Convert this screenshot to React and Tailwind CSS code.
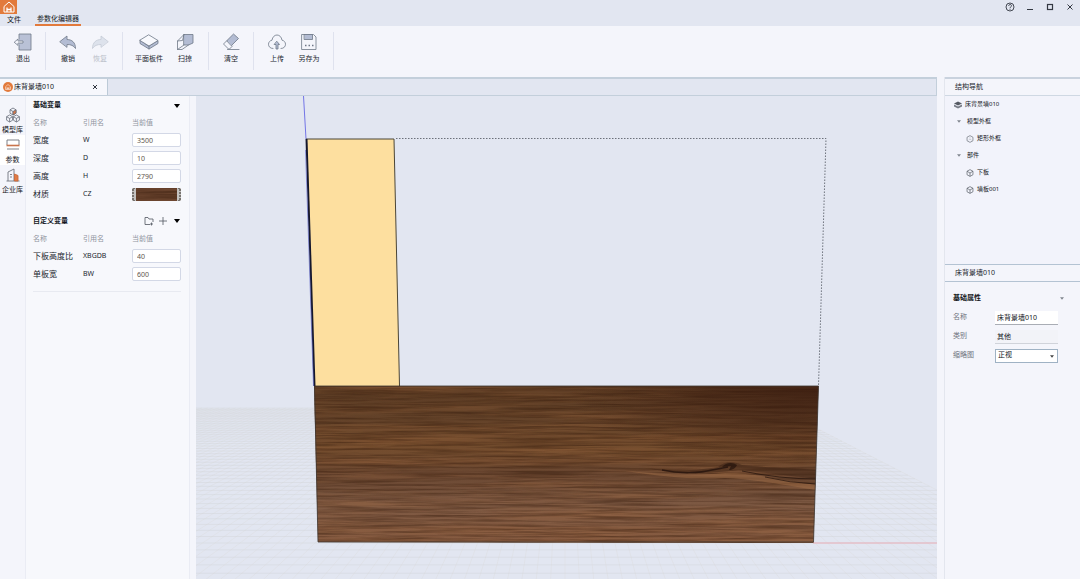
import { useState } from "react";

const BASIC_PARAMS = [
  { id: "w", name: "宽度", ref: "W", value: "3500" },
  { id: "d", name: "深度", ref: "D", value: "10" },
  { id: "h", name: "高度", ref: "H", value: "2790" },
  { id: "cz", name: "材质", ref: "CZ", material: true },
];

const CUSTOM_PARAMS = [
  { id: "xbgdb", name: "下板高度比", ref: "XBGDB", value: "40" },
  { id: "bw", name: "单板宽", ref: "BW", value: "600" },
];

const ICON = {
  fill: "none",
  stroke: "#6f7888",
  strokeWidth: 0.8,
  strokeLinejoin: "round",
  strokeLinecap: "round",
};

function ExitIcon() {
  return (
    <svg className="size-5" viewBox="0 0 20 20" {...ICON}>
      <path d="M6 7V2h12v16H6v-5" fill="#b9c1d6" stroke="none" />
      <path d="M6 7V2h12v16H6v-5" />
      <path d="M1.500 10l3.500-3v2h5v2H5v2z" fill="#f4f5fb" />
    </svg>
  );
}

function UndoIcon() {
  return (
    <svg className="size-5" viewBox="0 0 20 20" {...ICON}>
      <path d="M2 9.500L9 4v3.500c5 0 8.500 3 8.500 9-2-3-4.500-4-8.500-4V15z" fill="#b3bcd3" />
    </svg>
  );
}

function RedoIcon() {
  return (
    <svg className="size-5" viewBox="0 0 20 20" {...ICON} stroke="#c4cad6">
      <path d="M18 9.500L11 4v3.500c-5 0-8.500 3-8.500 9 2-3 4.500-4 8.500-4V15z" fill="#dde2ec" />
    </svg>
  );
}

function PlateIcon() {
  return (
    <svg className="size-5" viewBox="0 0 20 20" {...ICON}>
      <path d="M1 8.500v3l9 5.500 9-5.500v-3L10 14z" fill="#b3bcd3" />
      <path d="M10 3l9 5.500-9 5.500-9-5.500z" fill="#f8f9fd" />
      <path d="M10 14v3" />
    </svg>
  );
}

function SweepIcon() {
  return (
    <svg className="size-5" viewBox="0 0 20 20" {...ICON}>
      <path d="M9 2.500h9v8.500l-4.500 2H9z" fill="#b3bcd3" />
      <path d="M9 2.500L2.500 9v8.500H7l6.500-4.500M2.500 9l5-.5L9 2.500M2.500 17.500L9 13" />
    </svg>
  );
}

function EraserIcon() {
  return (
    <svg className="size-5" viewBox="0 0 20 20" {...ICON}>
      <path d="M6 8.500L12.500 2l5 4.500-7 7z" fill="#b3bcd3" />
      <path d="M6 8.500l-3.500 3.500 5 5h1l3-3M6.500 17.500H18" />
    </svg>
  );
}

function UploadIcon() {
  return (
    <svg className="size-5" viewBox="0 0 20 20" {...ICON}>
      <path d="M6 16.500C3 16.500 1.500 14.500 1.500 12.200c0-2 1.500-3.700 3.500-4C5.500 5 7.500 3 10 3s4.500 2 5 5.200c2 .3 3.500 2 3.500 4 0 2.300-1.500 4.300-4.500 4.300" />
      <path d="M10 9.500l2.500 3H11V17H9v-4.500H7.500z" fill="#b3bcd3" />
    </svg>
  );
}

function SaveIcon() {
  return (
    <svg className="size-5" viewBox="0 0 20 20" {...ICON}>
      <path d="M3 2.500h11.500L17 5v12.500H3z" />
      <path d="M5.500 2.500h8v5h-8z" fill="#b3bcd3" />
      <path d="M6 13.500h1.500M9.500 13.500H11M13 13.500h1.500" strokeWidth="1.600" strokeLinecap="butt" />
    </svg>
  );
}

const TOOL_GROUPS = [
  { id: "exit", className: "pl-[7px] pr-1.5", tools: [{ label: "退出", Icon: ExitIcon }] },
  {
    id: "history",
    className: "px-1.5",
    tools: [
      { label: "撤销", Icon: UndoIcon },
      { label: "恢复", Icon: RedoIcon, disabled: true },
    ],
  },
  {
    id: "shape",
    className: "gap-1 pl-2.5 pr-[7px]",
    tools: [
      { label: "平面板件", Icon: PlateIcon },
      { label: "扫掠", Icon: SweepIcon },
    ],
  },
  { id: "clear", className: "px-1.5", tools: [{ label: "清空", Icon: EraserIcon }] },
  {
    id: "save",
    className: "pl-[7px] pr-2",
    tools: [
      { label: "上传", Icon: UploadIcon },
      { label: "另存为", Icon: SaveIcon },
    ],
  },
];

function HouseLogo({ className }) {
  return (
    <svg className={className} viewBox="0 0 16 14">
      <path d="M3 6.500L8 2l5 4.500V12H3z" fill="none" stroke="#fff" strokeWidth="1" />
      <path d="M6 12V7.500M10 12V7.500M6 9.500h4" stroke="#fff" strokeWidth="1.300" />
    </svg>
  );
}

function CubeIcon({ className }) {
  return (
    <svg className={className} viewBox="0 0 10 10" fill="none" stroke="#5c616a" strokeWidth="0.9">
      <path d="M5 .8l3.700 2v4.400L5 9.200 1.300 7.200V2.800zM1.300 2.800L5 5l3.700-2.200M5 5v4.200" />
    </svg>
  );
}

function FrameIcon({ className }) {
  return (
    <svg className={className} viewBox="0 0 10 10" fill="none" stroke="#70757e" strokeWidth="0.9">
      <path d="M5 .8l3.700 2v4.400L5 9.200 1.300 7.200V2.800z" />
      <path d="M5 3v2.200L3 6.500M5 5.200l2 1.300" strokeWidth="0.500" strokeDasharray="1 .6" />
    </svg>
  );
}

function LibraryIcon() {
  return (
    <svg className="size-4" viewBox="0 0 16 16" fill="none" stroke="#666c78" strokeWidth="0.8">
      <path d="M8 1l3 1.800v3.400L8 8 5 6.200V2.800zM5 2.800l3 1.700M8 4.500V8" />
      <path d="M8 4.500l3-1.700v3.400L8 8z" fill="#d9794a" />
      <path d="M4.600 8l3 1.700v3.500L4.600 15l-3-1.800V9.700zM1.600 9.700l3 1.700 3-1.700M4.600 11.400V15" />
      <path d="M11.400 8l3 1.700v3.500l-3 1.800-3-1.800V9.700zM8.400 9.700l3 1.700 3-1.700M11.400 11.400V15" />
    </svg>
  );
}

function ParamIcon() {
  return (
    <svg className="size-4" viewBox="0 0 16 16" fill="none" stroke="#70757e" strokeWidth="0.9">
      <path d="M2 8V3h12v5" fill="#fff" />
      <path d="M1.500 8.500h13" stroke="#c9744c" strokeWidth="1.600" />
      <path d="M3 11v2M5 11v2M7 11v2M9 11v2M11 11v2M13 11v2" />
    </svg>
  );
}

function CompanyIcon() {
  return (
    <svg className="size-4" viewBox="0 0 16 16" fill="none" stroke="#70757e" strokeWidth="0.9">
      <path d="M3 14V5l6-3v12M1.500 14h13M5 7.500h2M5 10h2" />
      <path d="M9.500 7l3.500 1.500V14H9.500z" fill="#e07a45" stroke="#c96a3a" />
    </svg>
  );
}

const NAV_ITEMS = [
  { label: "模型库", Icon: LibraryIcon },
  { label: "参数", Icon: ParamIcon },
  { label: "企业库", Icon: CompanyIcon },
];

function Caret({ className }) {
  return (
    <svg className={className} viewBox="0 0 6 4" fill="currentColor">
      <path d="M0 0h6L3 4z" />
    </svg>
  );
}

function WindowBar() {
  return (
    <div className="flex h-3.5 items-center justify-between">
      <div className="flex h-3.5 w-[17px] items-center justify-center bg-[#e27a3c]">
        <HouseLogo className="h-3.5 w-4" />
      </div>
      <div className="flex items-center gap-2.5 pr-[5px] text-[#333842]">
        <button aria-label="帮助">
          <svg className="size-2.5" viewBox="0 0 10 10" fill="none" stroke="currentColor" strokeWidth="0.9">
            <circle cx="5" cy="5" r="4" />
            <path d="M3.700 4c0-2 2.800-2 2.800-.2C6.500 5 5 4.800 5 6.200M5 6.900v.9" />
          </svg>
        </button>
        <button aria-label="最小化">
          <svg className="size-2.5" viewBox="0 0 10 10" stroke="currentColor">
            <path d="M2 7.500h6" />
          </svg>
        </button>
        <button aria-label="最大化">
          <svg className="size-2.5" viewBox="0 0 10 10" fill="none" stroke="currentColor" strokeWidth="1.200">
            <rect x="2.500" y="2.500" width="5" height="5" />
          </svg>
        </button>
        <button aria-label="关闭">
          <svg className="size-2.5" viewBox="0 0 10 10" stroke="currentColor">
            <path d="M2.500 2.500l5 5M7.500 2.500l-5 5" />
          </svg>
        </button>
      </div>
    </div>
  );
}

function Toolbar() {
  return (
    <div className="flex h-[51px] bg-[#f4f5fb] py-1.5">
      {TOOL_GROUPS.map((group) => (
        <div key={group.id} className={`flex h-[38px] border-r border-[#dfe2ee] ${group.className}`}>
          {group.tools.map(({ label, Icon, disabled }) => (
            <button
              key={label}
              disabled={disabled}
              className="flex w-8 flex-col items-center gap-0.5 text-[7px] leading-[9px] whitespace-nowrap text-[#22262e] disabled:text-[#b9bec8]"
            >
              <Icon />
              {label}
            </button>
          ))}
        </div>
      ))}
    </div>
  );
}

function SideNav({ active, onSelect }) {
  return (
    <nav className="flex w-[25px] shrink-0 flex-col pt-[9px]">
      {NAV_ITEMS.map(({ label, Icon }) => (
        <button
          key={label}
          onClick={() => onSelect(label)}
          className={`flex h-[30px] flex-col items-center justify-center gap-0.5 text-[7px] leading-[9px] text-[#14171c] ${
            active === label ? "bg-white" : ""
          }`}
        >
          <Icon />
          <span className="whitespace-nowrap">{label}</span>
        </button>
      ))}
    </nav>
  );
}

function ParamTable({ rows }) {
  return (
    <table className="w-full table-fixed text-left">
      <thead>
        <tr className="h-4 text-[7px] leading-3 text-[#8f949e]">
          <th className="w-[50px] font-normal">名称</th>
          <th className="font-normal">引用名</th>
          <th className="w-[49px] font-normal">当前值</th>
        </tr>
      </thead>
      <tbody>
        {rows.map((row) => (
          <tr key={row.id} className="h-[18px] text-[8px] leading-[14px] text-[#22262e]">
            <td className="whitespace-nowrap">
              <label htmlFor={row.id}>{row.name}</label>
            </td>
            <td className="text-[7px]">{row.ref}</td>
            <td>
              {row.material ? (
                <button id={row.id} className="block h-[13px] w-full">
                  <svg className="size-full" viewBox="0 0 49 13" preserveAspectRatio="none">
                    <rect width="49" height="13" fill="#c4c2c0" />
                    <rect x="1" width="47" height="13" fill="none" stroke="#77736f" strokeWidth="2" strokeDasharray="2 1" />
                    <rect x="4" width="41" height="13" fill="#6d4630" />
                    <rect x="4" width="41" height="13" filter="url(#grain)" opacity="0.5" />
                  </svg>
                </button>
              ) : (
                <input
                  id={row.id}
                  defaultValue={row.value}
                  className="block h-3.5 w-full rounded-xs border border-[#d3d8e6] bg-white px-1 text-[7px] leading-3 text-[#5f574e] outline-none"
                />
              )}
            </td>
          </tr>
        ))}
      </tbody>
    </table>
  );
}

function ParamPanel() {
  return (
    <section className="w-[165px] shrink-0 border-x border-[#eaecf4] bg-[#f7f8fc] pr-2 pl-[7px]">
      <div className="flex h-[19px] items-center justify-between pr-px">
        <h2 className="text-[7px] font-bold text-[#14171c]">基础变量</h2>
        <button aria-label="收起基础变量">
          <Caret className="h-1 w-1.5" />
        </button>
      </div>
      <ParamTable rows={BASIC_PARAMS} />
      <div className="mt-2 flex h-5 items-center justify-between pr-px">
        <h2 className="text-[7px] font-bold text-[#14171c]">自定义变量</h2>
        <div className="flex items-center gap-1">
          <button aria-label="新建分组">
            <svg className="size-2.5" viewBox="0 0 10 10" fill="none" stroke="#50555f" strokeWidth="0.8">
              <path d="M6 8.500H1v-7h3l1 1.500h4V6M7.500 6.500v3M6 8h3" />
            </svg>
          </button>
          <button aria-label="新建变量">
            <svg className="size-2.5" viewBox="0 0 10 10" stroke="#50555f" strokeWidth="0.8">
              <path d="M5 1v8M1 5h8" />
            </svg>
          </button>
          <button aria-label="收起自定义变量" className="pl-0.5">
            <Caret className="h-1 w-1.5" />
          </button>
        </div>
      </div>
      <ParamTable rows={CUSTOM_PARAMS} />
      <hr className="mt-2 border-[#e8eaf1]" />
    </section>
  );
}

// Ground grid: vanishing point, far edge and the row where the red axis lies.
const VANISH = { x: 565, y: 299 };
const AXIS_Y = 543;
const FAR_Y = 408;

function gridPath() {
  const depth = AXIS_Y - VANISH.y;
  const edge = (i, y) => VANISH.x + (i * 12.5 * (y - VANISH.y)) / depth;
  let d = "";
  for (let i = -110; i <= 38; i++) {
    d += `M${edge(i, FAR_Y).toFixed(1)} ${FAR_Y}L${edge(i, 700).toFixed(1)} 700`;
  }
  return d;
}

function gridRows() {
  const depth = AXIS_Y - VANISH.y;
  let d = "";
  for (let k = -6; k <= 45; k++) {
    const y = VANISH.y + depth / (1 + k * 0.0275);
    const right = VANISH.x + (38 * 12.5 * (y - VANISH.y)) / depth;
    d += `M0 ${y.toFixed(1)}H${right.toFixed(1)}`;
  }
  return d;
}

function Viewport() {
  return (
    <div className="relative min-w-0 flex-1 overflow-hidden bg-[#e2e6f1]">
      <svg className="absolute inset-0 size-full" viewBox="196 96 741 483" preserveAspectRatio="xMidYMid slice">
        <defs>
          <linearGradient id="wood" x1="0" y1="0" x2="0" y2="1">
            <stop offset="0" stopColor="#5c3c24" />
            <stop offset="0.2" stopColor="#634229" />
            <stop offset="0.4" stopColor="#744d2e" />
            <stop offset="0.55" stopColor="#6a4731" />
            <stop offset="0.75" stopColor="#7d5943" />
            <stop offset="1" stopColor="#875b40" />
          </linearGradient>
          <radialGradient id="shade" cx="1" cy="0" r="0.5">
            <stop offset="0" stopColor="#35170c" stopOpacity="0.7" />
            <stop offset="1" stopColor="#35170c" stopOpacity="0" />
          </radialGradient>
          <filter id="grain" x="0" y="0" width="1" height="1" colorInterpolationFilters="sRGB">
            <feTurbulence type="fractalNoise" baseFrequency="0.012 0.45" numOctaves="4" seed="7" />
            <feColorMatrix values="0 0 0 0 0.2  0 0 0 0 0.1  0 0 0 0 0.04  2.4 0 0 0 -0.9" />
          </filter>
          <filter id="glow" x="0" y="0" width="1" height="1" colorInterpolationFilters="sRGB">
            <feTurbulence type="fractalNoise" baseFrequency="0.006 0.12" numOctaves="4" seed="21" />
            <feColorMatrix values="0 0 0 0 0.66  0 0 0 0 0.43  0 0 0 0 0.26  2 0 0 0 -0.8" />
          </filter>
          <clipPath id="board">
            <path d="M314 386H818.500L813.500 543L318 542z" />
          </clipPath>
        </defs>
        <path d={gridPath()} stroke="#d8d7d3" strokeWidth="0.5" opacity="0.55" />
        <path d={gridRows()} stroke="#cdd0d2" strokeWidth="0.6" opacity="0.6" />
        <path d="M813 543H1200" stroke="#e9aeb8" />
        <path d="M303.500 96L306 139" stroke="#7375e6" />
        <path d="M306 139H394L399.500 386H315z" fill="#fddf9f" />
        <path d="M306 139H394L399.500 386" fill="none" stroke="#4b4638" />
        <path d="M306.500 139L314.500 386" stroke="#15172c" strokeWidth="2" />
        <path d="M305.500 150L313.500 386" stroke="#5b62c8" strokeWidth="0.6" />
        <path d="M396 138.500H826L818.500 386" fill="none" stroke="#6c717b" strokeDasharray="1.500 1.500" />
        <g clipPath="url(#board)">
          <rect x="314" y="386" width="505" height="158" fill="url(#wood)" />
          <rect x="314" y="386" width="505" height="158" filter="url(#glow)" opacity="0.35" />
          <rect x="314" y="386" width="505" height="158" filter="url(#grain)" opacity="0.45" />
          <rect x="314" y="386" width="505" height="158" fill="url(#shade)" />
          <path d="M625 471C660 474 690 476 725 473C760 473 785 482 820 485V491C780 484 750 479 725 478C690 480 660 476 625 471z" fill="#a06e48" opacity="0.5" />
          <path d="M645 468C680 472 700 470 718 467C724 461 734 461 742 465C760 467 790 468 820 470V479C790 476 760 472 738 470C710 474 680 474 645 468z" fill="#3a2114" opacity="0.45" />
          <path d="M662 470C680 474 700 473 712 470L728 467" fill="none" stroke="#24130c" strokeWidth="1.500" opacity="0.8" />
          <path d="M722 467C726 462 733 462 737 465C736 468 732 470 729 470L731 466" fill="#24130c" opacity="0.7" />
          <path d="M742 471Q780 479 816 479M765 477Q790 483 816 484" fill="none" stroke="#24130c" strokeWidth="0.900" opacity="0.8" />
        </g>
        <path d="M314.500 386L318 542H813.500L818.500 386z" fill="none" stroke="#3c3530" strokeWidth="0.800" />
      </svg>
    </div>
  );
}

function TreeBranch({ label, children }) {
  return (
    <li>
      <div className="flex h-[17px] items-center gap-1.5 pl-3">
        <Caret className="h-[3px] w-1 text-[#81868f]" />
        {label}
      </div>
      <ul>{children}</ul>
    </li>
  );
}

function TreeLeaf({ label, Icon = CubeIcon }) {
  return (
    <li className="flex h-[17px] items-center gap-[3px] pl-[21px]">
      <Icon className="size-2" />
      {label}
    </li>
  );
}

function StructurePanel() {
  return (
    <section className="flex h-[187px] flex-col">
      <h2 className="flex h-[19px] items-center border-t-2 border-b border-t-[#c9d2de] border-b-[#cfd8e3] pl-2.5 text-[7px] text-[#22262e]">
        结构导航
      </h2>
      <ul className="flex-1 bg-[#f2f3fb] text-[6px] text-[#14171c]">
        <li className="flex h-[17px] items-center gap-[3px] pl-[9px]">
          <svg className="size-2" viewBox="0 0 8 8">
            <path d="M4 0.500L8 2.500 4 4.500 0 2.500z" fill="#555a63" />
            <path d="M0 3.500l4 2 4-2v2L4 7.500l-4-2z" fill="#777c86" />
          </svg>
          床背景墙010
        </li>
        <TreeBranch label="模型外框">
          <TreeLeaf label="矩形外框" Icon={FrameIcon} />
        </TreeBranch>
        <TreeBranch label="部件">
          <TreeLeaf label="下板" />
          <TreeLeaf label="墙板001" />
        </TreeBranch>
      </ul>
    </section>
  );
}

function PropertyPanel() {
  const field = "h-3.5 w-[63px] px-0.5 text-[7px] text-[#14171c] outline-none";
  return (
    <section className="flex-1">
      <h2 className="flex h-[18px] items-center border-y border-[#b4c3d3] pl-2.5 text-[7px] text-[#22262e]">
        床背景墙010
      </h2>
      <div className="pt-1.5 pr-4 pl-2 text-[7px] text-[#6f747e]">
        <div className="flex h-5 items-center justify-between">
          <h3 className="font-bold text-[#14171c]">基础属性</h3>
          <button aria-label="收起基础属性">
            <Caret className="h-[3px] w-1 text-[#81868f]" />
          </button>
        </div>
        <div className="flex h-[19px] items-center">
          <label htmlFor="prop-name" className="w-[42px]">名称</label>
          <input
            id="prop-name"
            defaultValue="床背景墙010"
            className={`${field} border-b border-[#a9adb5] bg-white`}
          />
        </div>
        <div className="flex h-[19px] items-center">
          <label htmlFor="prop-type" className="w-[42px]">类别</label>
          <input
            id="prop-type"
            readOnly
            defaultValue="其他"
            className={`${field} border-b border-[#d0d3da] bg-[#f2f3f8]`}
          />
        </div>
        <div className="flex h-[19px] items-center">
          <label htmlFor="prop-thumb" className="w-[42px]">缩略图</label>
          <div className="relative">
            <select
              id="prop-thumb"
              className={`${field} block appearance-none border border-[#9fb2c4] bg-white`}
            >
              <option>正视</option>
              <option>侧视</option>
            </select>
            <Caret className="pointer-events-none absolute top-1.5 right-1 h-[3px] w-1 text-[#444]" />
          </div>
        </div>
      </div>
    </section>
  );
}

export default function App() {
  const [activeNav, setActiveNav] = useState("参数");

  return (
    <div className="flex h-screen flex-col overflow-hidden bg-[#f4f5fb] font-['Noto_Sans','Noto_Sans_CJK_SC',sans-serif]">
      <header>
        <div className="bg-[#e2e6f1]">
          <WindowBar />
          <div className="flex h-3 items-center gap-3.5 pl-[7px] text-[7px] leading-[10px] text-[#14171c]">
            <button>文件</button>
            <button className="border-b-2 border-[#e27a3c] px-0.5">参数化编辑器</button>
          </div>
        </div>
        <Toolbar />
      </header>

      <div className="flex min-h-0 flex-1">
        <main className="flex min-w-0 flex-1 flex-col">
          <div className="flex h-[19px] shrink-0 border border-t-2 border-l-0 border-[#c3cfdb] bg-[#e2e6f1]">
            <div className="flex w-[108px] items-center border-r border-[#bccad7] bg-[#f6f7fc] pr-2 pl-[3px]">
              <div className="flex size-2.5 items-center justify-center rounded-full bg-[#e27a3c]">
                <HouseLogo className="size-2" />
              </div>
              <span className="flex-1 pl-px text-[7px] text-[#14171c]">床背景墙010</span>
              <button aria-label="关闭标签">
                <svg className="size-2" viewBox="0 0 8 8" stroke="#333842">
                  <path d="M2 2l4 4M6 2L2 6" />
                </svg>
              </button>
            </div>
          </div>
          <div className="flex min-h-0 flex-1">
            <SideNav active={activeNav} onSelect={setActiveNav} />
            <ParamPanel />
            <div className="w-1.5 shrink-0" />
            <Viewport />
          </div>
        </main>
        <aside className="ml-[7px] flex w-[136px] shrink-0 flex-col border-l border-[#e3e6ee]">
          <StructurePanel />
          <PropertyPanel />
        </aside>
      </div>
    </div>
  );
}
